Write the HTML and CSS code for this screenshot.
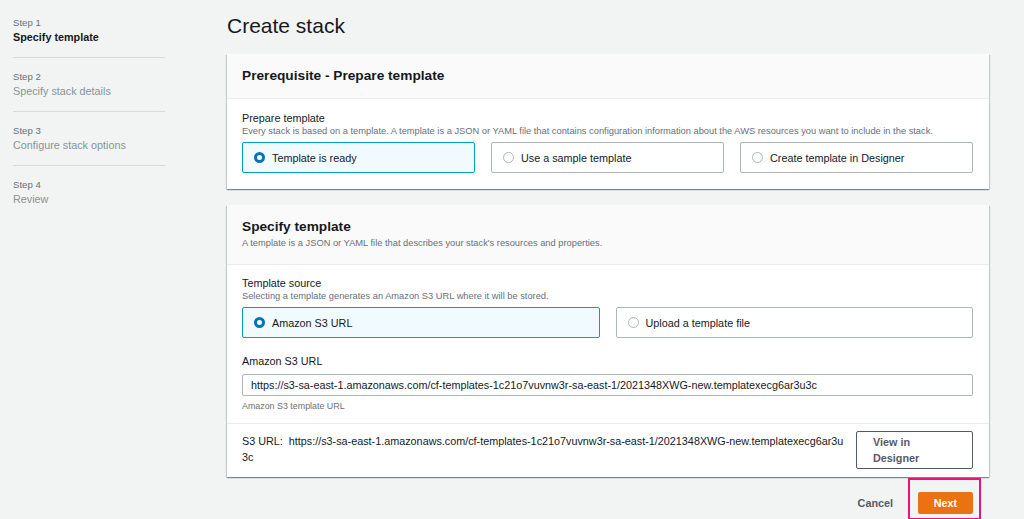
FILE: index.html
```html
<!DOCTYPE html>
<html lang="en">
<head>
    <meta charset="UTF-8">
    <meta name="viewport" content="width=device-width, initial-scale=1.0">
    <title>Create stack</title>
    <link rel="stylesheet" href="styles.css">
</head>
<body>
    <div class="layout">
        <nav class="steps">
            <div class="step">
                <div class="step-num">Step 1</div>
                <div class="step-title active">Specify template</div>
            </div>
            <div class="step">
                <div class="step-num">Step 2</div>
                <div class="step-title">Specify stack details</div>
            </div>
            <div class="step">
                <div class="step-num">Step 3</div>
                <div class="step-title">Configure stack options</div>
            </div>
            <div class="step last">
                <div class="step-num">Step 4</div>
                <div class="step-title">Review</div>
            </div>
        </nav>

        <main class="main">
            <h1>Create stack</h1>

            <section class="card">
                <div class="card-header">
                    <h2>Prerequisite - Prepare template</h2>
                </div>
                <div class="card-body pad-bottom">
                    <div class="label">Prepare template</div>
                    <div class="desc">Every stack is based on a template. A template is a JSON or YAML file that contains configuration information about the AWS resources you want to include in the stack.</div>
                    <div class="tiles three">
                        <div class="tile selected"><span class="radio"></span>Template is ready</div>
                        <div class="tile"><span class="radio"></span>Use a sample template</div>
                        <div class="tile"><span class="radio"></span>Create template in Designer</div>
                    </div>
                </div>
            </section>

            <section class="card">
                <div class="card-header tall">
                    <h2>Specify template</h2>
                    <div class="desc">A template is a JSON or YAML file that describes your stack's resources and properties.</div>
                </div>
                <div class="card-body source">
                    <div class="label">Template source</div>
                    <div class="desc">Selecting a template generates an Amazon S3 URL where it will be stored.</div>
                    <div class="tiles two">
                        <div class="tile selected"><span class="radio"></span>Amazon S3 URL</div>
                        <div class="tile"><span class="radio"></span>Upload a template file</div>
                    </div>
                    <div class="label field-label">Amazon S3 URL</div>
                    <input class="url-input" type="text" value="https://s3-sa-east-1.amazonaws.com/cf-templates-1c21o7vuvnw3r-sa-east-1/2021348XWG-new.templatexecg6ar3u3c">
                    <div class="hint">Amazon S3 template URL</div>
                </div>
                <div class="card-footer">
                    <div class="s3-url">S3 URL:&nbsp; https://s3-sa-east-1.amazonaws.com/cf-templates-1c21o7vuvnw3r-sa-east-1/2021348XWG-new.templatexecg6ar3u3c</div>
                    <button class="btn-outline">View in Designer</button>
                </div>
            </section>

            <div class="actions">
                <button class="btn-link">Cancel</button>
                <div class="highlight">
                    <button class="btn-primary">Next</button>
                </div>
            </div>
        </main>
    </div>
</body>
</html>
```

FILE: styles.css
```css
body {
    margin: 0;
    padding: 0;
    background-color: #f2f3f3;
    font-family: "Liberation Sans", Arial, sans-serif;
    color: #16191f;
    overflow: hidden;
}

.layout {
    display: flex;
}

/* left wizard steps */
.steps {
    width: 152px;
    padding: 16px 62px 0 13px;
    flex-shrink: 0;
}

.step {
    padding: 12px 0 12px;
    border-bottom: 1px solid #d5dbdb;
}

.step:first-child {
    padding-top: 0;
}

.step.last {
    border-bottom: none;
}

.step-num {
    font-size: 9.6px;
    line-height: 13px;
    color: #687078;
}

.step-title {
    font-size: 10.8px;
    line-height: 16px;
    color: #879596;
}

.step-title.active {
    color: #16191f;
    font-weight: bold;
}

/* main column */
.main {
    width: 762px;
}

h1 {
    margin: 12px 0 14px;
    font-size: 21px;
    line-height: 28px;
    font-weight: normal;
    color: #16191f;
}

.card {
    background-color: white;
    box-shadow: 0 1px 1px 0 rgba(0, 28, 36, 0.3), 1px 1px 1px 0 rgba(0, 28, 36, 0.15), -1px 1px 1px 0 rgba(0, 28, 36, 0.15);
    margin-bottom: 16px;
}

.card-header {
    background-color: #fafafa;
    border-bottom: 1px solid #eaeded;
    padding: 12px 16px 12px 15px;
}

.card-header.tall {
    padding-bottom: 15px;
}

h2 {
    margin: 0;
    font-size: 13.7px;
    line-height: 20px;
    font-weight: bold;
}

.card-body {
    padding: 12px 16px 0 15px;
}

.card-body.pad-bottom {
    padding-bottom: 16px;
}

.card-body.source {
    padding-top: 11px;
    padding-bottom: 11px;
    border-bottom: 1px solid #eaeded;
}

.label {
    font-size: 10.8px;
    line-height: 14px;
}

.desc {
    font-size: 9.3px;
    line-height: 12px;
    color: #687078;
}

.tiles {
    display: grid;
    gap: 16px;
    margin-top: 5px;
}

.tiles.three {
    grid-template-columns: repeat(3, 1fr);
}

.tiles.two {
    grid-template-columns: repeat(2, 1fr);
}

.tile {
    display: flex;
    align-items: center;
    height: 29px;
    border: 1px solid #aab7b8;
    border-radius: 2px;
    padding-left: 11px;
    font-size: 10.8px;
    color: #16191f;
}

.tile.selected {
    background-color: #f1faff;
    border-color: #00a1c9;
}

.radio {
    width: 9px;
    height: 9px;
    border: 1px solid #aab7b8;
    border-radius: 50%;
    margin-right: 7px;
    background: white;
    flex-shrink: 0;
}

.tile.selected .radio {
    width: 5px;
    height: 5px;
    border: 3px solid #0073bb;
}

.field-label {
    margin-top: 16px;
}

.url-input {
    display: block;
    box-sizing: border-box;
    width: 100%;
    height: 22px;
    margin-top: 6px;
    padding: 0 8px;
    border: 1px solid #aab7b8;
    border-radius: 2px;
    font-family: inherit;
    font-size: 10.8px;
    color: #16191f;
    outline: none;
}

.hint {
    margin-top: 4px;
    font-size: 8.9px;
    line-height: 12px;
    color: #687078;
}

.card-footer {
    display: flex;
    align-items: flex-start;
    padding: 7px 16px 8px 15px;
}

.s3-url {
    flex: 1;
    margin-top: 2px;
    padding-right: 11px;
    font-size: 10.8px;
    line-height: 16px;
    word-break: break-all;
}

.btn-outline {
    width: 117px;
    height: 38px;
    flex-shrink: 0;
    padding: 0 16px;
    text-align: left;
    background: white;
    border: 1px solid #545b64;
    border-radius: 2px;
    font-family: inherit;
    font-size: 10.8px;
    line-height: 16px;
    font-weight: bold;
    color: #545b64;
}

/* bottom actions */
.actions {
    display: flex;
    justify-content: flex-end;
    align-items: flex-start;
    margin-top: -15px;
    padding-right: 8px;
}

.btn-link {
    margin-top: 15px;
    margin-right: 15px;
    padding: 0;
    background: none;
    border: none;
    font-family: inherit;
    font-size: 10.8px;
    font-weight: bold;
    line-height: 20px;
    color: #545b64;
}

.highlight {
    border: 2px solid #e7157b;
    padding: 12px 6px 4px 8px;
}

.btn-primary {
    display: block;
    width: 55px;
    height: 22px;
    padding: 0;
    background-color: #ec7211;
    border: none;
    border-radius: 2px;
    font-family: inherit;
    font-size: 10.8px;
    font-weight: bold;
    color: white;
}
```
